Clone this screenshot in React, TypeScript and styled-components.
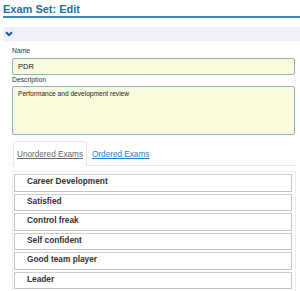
import React from 'react';
import styled, { createGlobalStyle } from 'styled-components';

const GlobalStyle = createGlobalStyle`
  body {
    margin: 0;
    background: #fff;
    font-family: "Liberation Sans", Arial, sans-serif;
  }
`;

const exams = [
  'Career Development',
  'Satisfied',
  'Control freak',
  'Self confident',
  'Good team player',
  'Leader',
];

const Page = styled.div`
  padding-left: 3px;
  width: 297px;
  height: 291px;
  overflow: hidden;
`;

const Title = styled.h1`
  margin: 0;
  padding-top: 2px;
  height: 14px;
  line-height: 14px;
  font-size: 11px;
  font-weight: bold;
  color: #1d6fa5;
  border-bottom: 2px solid #3d87b8;
`;

const CollapseBar = styled.div`
  margin-top: 9px;
  height: 14px;
  background: #f0f0fb;
  display: flex;
  align-items: center;
  padding-left: 2px;
`;

const Form = styled.div`
  padding: 0 5px 0 9px;
  display: flex;
  flex-direction: column;
`;

const Label = styled.label<{ $top: number }>`
  margin-top: ${p => p.$top}px;
  height: 9px;
  line-height: 9px;
  font-size: 6.8px;
  color: #333;
`;

const TextInput = styled.input`
  margin: 3px 0 0;
  box-sizing: border-box;
  height: 17px;
  border: 1px solid #86b8cc;
  border-radius: 2px;
  background: #fafadc;
  padding: 0 5px;
  font-family: "Liberation Sans", Arial, sans-serif;
  font-size: 7.5px;
  color: #222;
  outline: none;
`;

const TextArea = styled.textarea`
  margin: 2px 0 0;
  box-sizing: border-box;
  height: 49px;
  border: 1px solid #86b8cc;
  border-radius: 2px;
  background: #fafadc;
  padding: 3px 5px;
  font-family: "Liberation Sans", Arial, sans-serif;
  font-size: 6.6px;
  color: #222;
  outline: none;
  resize: none;
`;

const Tabs = styled.div`
  margin-top: 6px;
  display: flex;
  align-items: flex-end;
  border-bottom: 1px solid #e6e6e6;
  height: 24px;
  margin-right: -1px;
`;

const Tab = styled.a<{ $active?: boolean }>`
  box-sizing: border-box;
  height: ${p => (p.$active ? '25px' : '24px')};
  margin-bottom: ${p => (p.$active ? '-1px' : '0')};
  padding: 8px 3px 0;
  margin-left: 1px;
  font-size: 8.2px;
  text-decoration: underline;
  color: ${p => (p.$active ? '#666' : '#2b7bc4')};
  background: #fff;
  border: 1px solid ${p => (p.$active ? '#e6e6e6' : 'transparent')};
  border-bottom: none;
  border-radius: 3px 3px 0 0;
`;

const List = styled.div`
  margin-top: 5px;
  margin-right: -1px;
  height: 130px;
  border: 1px solid #eeeeee;
  border-bottom: none;
  padding: 2px 3px 0 1px;
  display: flex;
  flex-direction: column;
  gap: 2px;
`;

const Item = styled.div`
  box-sizing: border-box;
  height: 17.5px;
  border: 1.5px solid #c4c4c4;
  border-top-color: #cfcfcf;
  padding: 1px 0 0 12px;
  line-height: 10px;
  font-size: 8.3px;
  font-weight: bold;
  color: #333;
  background: #fff;
`;

const Chevron = () => (
  <svg width="8" height="6" viewBox="0 0 8 6">
    <path d="M1 1.2 L4 4.2 L7 1.2" fill="none" stroke="#1a5a8a" strokeWidth="2" />
  </svg>
);

export default function App() {
  return (
    <Page>
      <GlobalStyle />
      <Title>Exam Set: Edit</Title>
      <CollapseBar>
        <Chevron />
      </CollapseBar>
      <Form>
        <Label $top={5}>Name</Label>
        <TextInput defaultValue="PDR" />
        <Label $top={0}>Description</Label>
        <TextArea defaultValue="Performance and development review" />
        <Tabs>
          <Tab $active>Unordered Exams</Tab>
          <Tab href="#">Ordered Exams</Tab>
        </Tabs>
        <List>
          {exams.map(e => (
            <Item key={e}>{e}</Item>
          ))}
        </List>
      </Form>
    </Page>
  );
}
